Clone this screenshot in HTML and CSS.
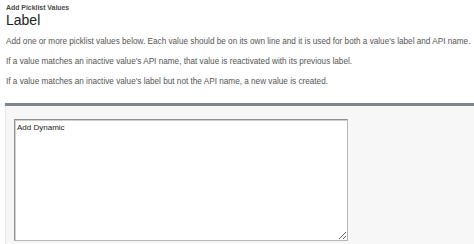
FILE: index.html
```html
<!DOCTYPE html>
<html>
<head>
<meta charset="utf-8">
<link rel="stylesheet" href="styles.css">
</head>
<body>
<div class="page">
  <div class="header">
    <div class="eyebrow">Add Picklist Values</div>
    <div class="title">Label</div>
  </div>
  <div class="info">
    <p>Add one or more picklist values below. Each value should be on its own line and it is used for both a value's label and API name.</p>
    <p>If a value matches an inactive value's API name, that value is reactivated with its previous label.</p>
    <p>If a value matches an inactive value's label but not the API name, a new value is created.</p>
  </div>
  <div class="panel">
    <textarea class="values">Add Dynamic</textarea>
  </div>
</div>
</body>
</html>
```
FILE: styles.css
```css
html, body {
  margin: 0;
  padding: 0;
  background: #ffffff;
  height: 100%;
}
body {
  font-family: "Liberation Sans", Arial, sans-serif;
  color: #3e3e3c;
  overflow: hidden;
}
.page {
  box-sizing: border-box;
  height: 100%;
  display: flex;
  flex-direction: column;
  padding: 4px 0 0 5px;
}
.header {
  padding-left: 1px;
}
.eyebrow {
  font-size: 6.9px;
  font-weight: bold;
  line-height: 8px;
  color: #4a4a4a;
}
.title {
  font-size: 14px;
  line-height: 16px;
  color: #222222;
}
.info {
  padding-left: 1px;
  margin-top: 9px;
}
.info p {
  margin: 0 0 10px 0;
  font-size: 8.2px;
  line-height: 10px;
  color: #555555;
  white-space: nowrap;
}
.panel {
  flex: 1;
  margin-top: 6px;
  border-top: 3px solid #7d858d;
  background: #f7f7f7;
  padding: 13px 0 0 9px;
  box-shadow: inset 1px 0 0 #e6e6e6;
}
.values {
  display: block;
  box-sizing: border-box;
  width: 334px;
  height: 122px;
  margin: 0;
  padding: 2px 2px;
  border: 1px solid #8f8f8f;
  border-right-color: #b5b5b5;
  border-bottom-color: #b5b5b5;
  box-shadow: inset 1px 1px 0 #d0d0d0;
  background: #ffffff;
  font-family: "Liberation Sans", Arial, sans-serif;
  font-size: 8px;
  line-height: 11px;
  color: #222222;
  resize: both;
  outline: none;
}
```
